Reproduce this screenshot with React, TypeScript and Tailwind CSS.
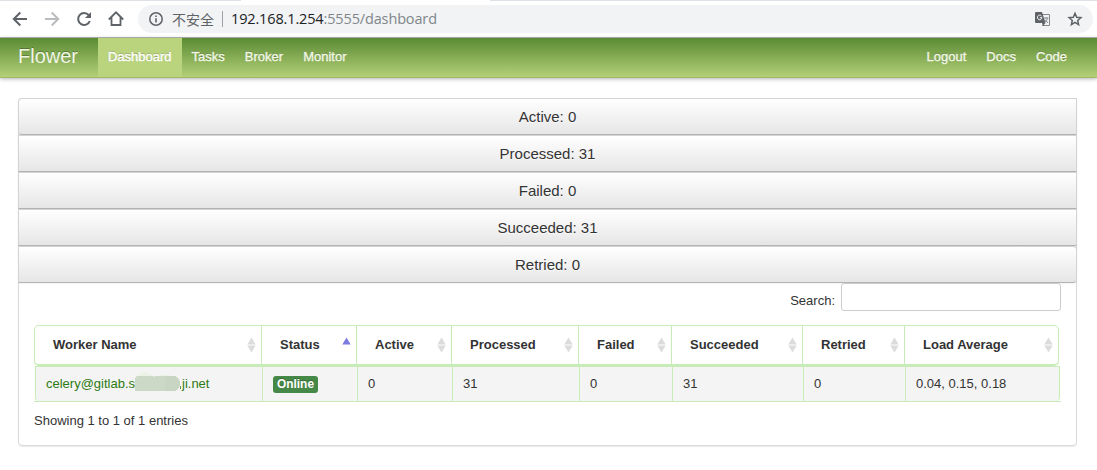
import type { ReactNode } from "react";

interface Column {
  label: string;
  width: string;
  value: ReactNode;
  sorted?: boolean;
}

const summary = [
  { label: "Active", value: 0 },
  { label: "Processed", value: 31 },
  { label: "Failed", value: 0 },
  { label: "Succeeded", value: 31 },
  { label: "Retried", value: 0 },
];

const columns: Column[] = [
  { label: "Worker Name", width: "w-[227px]", value: <WorkerName /> },
  {
    label: "Status",
    width: "w-[95px]",
    sorted: true,
    value: (
      <span className="mt-px rounded-[3px] bg-[#468847] px-1 text-[11.9px] leading-[17px] font-bold text-white [text-shadow:0_-1px_0_rgba(0,0,0,0.25)]">
        Online
      </span>
    ),
  },
  { label: "Active", width: "w-[95px]", value: 0 },
  { label: "Processed", width: "w-[127px]", value: 31 },
  { label: "Failed", width: "w-[93px]", value: 0 },
  { label: "Succeeded", width: "w-[131px]", value: 31 },
  { label: "Retried", width: "w-[102px]", value: 0 },
  { label: "Load Average", width: "w-[155px]", value: "0.04, 0.15, 0.18" },
];

function WorkerName() {
  return (
    <a className="flex items-center text-[#2d7a12]">
      <span className="w-[89px]">celery@gitlab.s</span>
      <svg width="47" height="20" viewBox="0 0 47 20" className="-mt-[3px] shrink-0">
        <path d="M2 4Q10-4 18 4Z" fill="#eaf3e6" />
        <path d="M21 4Q30 1 38 4Z" fill="#eaf3e6" />
        <path d="M2 4h16l1 1 1-1h20q5 3 5 7.500T40 19H0V6Z" fill="#cdd9c7" />
        <path d="M30 4h10q5 3 5 7.500T40 19H30Z" fill="#c8d5c2" />
        <path d="M45.500 14v3" stroke="#5c9a48" />
      </svg>
      <span>ji.net</span>
    </a>
  );
}

function SortIcon({ sorted }: { sorted?: boolean }) {
  return (
    <svg width="9" height="16" viewBox="0 0 9 16" className="shrink-0">
      {sorted ? (
        <path d="M4.5 0.5 8.700 7.500H.3Z" fill="#7b7be0" />
      ) : (
        <path d="M4.5 0.500 8.700 7.500H.3ZM.3 8.500h8.400L4.500 15.500Z" fill="#dcdcdc" />
      )}
    </svg>
  );
}

function BrowserBar() {
  return (
    <div className="flex h-[38px] flex-col border-b border-[#b3b5b0] bg-white">
      {/* Bottom edge of the tab strip, open under the active tab */}
      <div className="flex h-px justify-between">
        <div className="w-[241px] bg-[#dee1e6]" />
        <div className="w-[607px] bg-[#dee1e6]" />
      </div>
      <div className="flex flex-1 items-center pr-1">
        <svg width="138" height="28" viewBox="0 0 138 28" fill="none" strokeWidth="2">
          <path d="M27 14H14M20.300 7.500 13.800 14l6.500 6.500" stroke="#5f6368" />
          <path d="M45 14h13M51.700 7.500 58.200 14l-6.500 6.500" stroke="#babcbe" />
          <path d="M88.800 10.200A6 6 0 1 0 89.800 16" stroke="#5f6368" />
          <path d="M91 7v6h-6Z" fill="#5f6368" />
          <path d="M108.800 14.500 116 7.300l7.200 7.200M111.500 12.500V20h9v-7.500" stroke="#5f6368" strokeWidth="1.800" />
        </svg>
        <div className="flex h-7 flex-1 items-center rounded-full bg-[#f1f3f4] pr-[10px] pl-[11px] font-['Open_Sans','Noto_Sans_CJK_SC',sans-serif] text-[14.5px]">
          <svg width="14" height="14" viewBox="0 0 14 14" fill="none" stroke="#5f6368">
            <circle cx="7" cy="7" r="6.200" strokeWidth="1.500" />
            <path d="M7 6.200v4.300M7 3.500v1.600" strokeWidth="1.600" />
          </svg>
          <span className="ml-[9px] w-[43px] text-[14px] whitespace-nowrap text-[#5f6368]">不安全</span>
          <span className="mx-[7px] h-4 w-px bg-[#9aa0a6]" />
          <span className="ml-px tracking-[-0.14px] whitespace-nowrap text-[#202124]">
            192.168.1.254<span className="text-[#80868b]">:5555/dashboard</span>
          </span>
          <svg width="15" height="15" viewBox="0 0 15 15" className="ml-auto">
            <path d="M6 2.500h8.500v11H7" fill="#f1f3f4" stroke="#85898d" />
            <path d="M1 0h6l3.500 11H1a1 1 0 0 1-1-1V1a1 1 0 0 1 1-1Z" fill="#5f6368" />
            <path d="M7 11h3.500L8 14Z" fill="#5f6368" />
            <path d="M6.500 4A2.300 2.300 0 1 0 7 5.700H4.800" fill="none" stroke="#f1f3f4" />
            <path d="M9 6h4.500M11.200 5v1M12.500 6c-.4 2-1.500 3.500-3 4.500M10 7.500l3 3.500" fill="none" stroke="#85898d" />
          </svg>
          <svg width="16" height="16" viewBox="0 0 16 16" className="ml-[17px]" fill="none">
            <path d="m8 2.400 1.700 3.900 4.200.4-3.200 2.800.9 4.100L8 11.400l-3.600 2.200.9-4.100-3.200-2.800 4.200-.4Z" stroke="#5f6368" strokeWidth="1.500" />
          </svg>
        </div>
      </div>
    </div>
  );
}

function Navbar() {
  return (
    <nav className="flex h-10 border-b border-[#a1b86a] bg-linear-to-b from-[#5a8b34] to-[#b4d077] pr-5 text-[13px] text-[#f2f8e6] shadow-[0_1px_4px_rgba(0,0,0,0.3)] [text-shadow:0_-1px_0_rgba(0,0,0,0.25)]">
      <a className="w-[98px] pl-[18px] text-xl leading-[37px]">Flower</a>
      <div className="flex flex-1 leading-[37px] [-webkit-text-stroke:0.35px]">
        <a className="bg-[#bad37d] px-[10px] text-white">Dashboard</a>
        <a className="px-[10px]">Tasks</a>
        <a className="px-[10px]">Broker</a>
        <a className="px-[10px]">Monitor</a>
        <a className="ml-auto px-[10px]">Logout</a>
        <a className="px-[10px]">Docs</a>
        <a className="px-[10px]">Code</a>
      </div>
    </nav>
  );
}

export default function App() {
  return (
    <div className="h-[470px] overflow-hidden bg-white font-['Liberation_Sans',Arial,sans-serif] text-[13px] text-[#333]">
      <BrowserBar />
      <Navbar />

      <main className="mt-5 mr-5 ml-[18px] h-[348px] rounded border border-[#d9d9d9] shadow-[0_1px_1px_rgba(0,0,0,0.08)]">
        <div className="-mx-px -mt-px">
          {summary.map((item) => (
            <div
              key={item.label}
              className="h-[37px] border border-[#d4d4d4] border-b-[#b3b3b3] bg-linear-to-b from-white to-[#e6e6e6] text-center text-[15px] leading-[35px] shadow-[0_1px_2px_rgba(0,0,0,0.05)] [text-shadow:0_1px_1px_rgba(255,255,255,0.75)] first:rounded-l last:rounded-r">
              {item.label}: {item.value}
            </div>
          ))}
        </div>

        <div className="px-[15px]">
          <div className="flex justify-end">
            <label className="mr-[6px] leading-[35px]">Search:</label>
            <input className="h-7 w-[220px] rounded-[3px] border border-[#ccc] bg-white px-2 outline-none" />
          </div>

          {/* Workers table */}
          <div className="mt-[7px] w-[1027px]">
            <div className="flex h-[41px] w-[1025px] rounded-[5px] border border-b-2 border-[#c7ecb8]">
              {columns.map((col) => (
                <div
                  key={col.label}
                  className={`${col.width} flex shrink-0 items-center justify-between border-l border-[#c7ecb8] pr-[5px] pl-[18px] font-bold first:-ml-px first:border-transparent last:-mr-px last:pr-[6px]`}>
                  {col.label}
                  <SortIcon sorted={col.sorted} />
                </div>
              ))}
            </div>
            <div className="border-b border-[#c7ecb8]">
              <div className="ml-px flex h-[35px] w-[1025px] rounded-b border-t border-r border-[#c7ecb8] bg-[#f4f4f4]">
                {columns.map((col) => (
                  <div
                    key={col.label}
                    className={`${col.width} flex shrink-0 items-center border-l border-[#c7ecb8] pb-px pl-[10px] first:rounded-bl last:-mr-px`}>
                    {col.value}
                  </div>
                ))}
              </div>
            </div>
          </div>

          <p className="mt-[9px] leading-5">Showing 1 to 1 of 1 entries</p>
        </div>
      </main>
    </div>
  );
}
